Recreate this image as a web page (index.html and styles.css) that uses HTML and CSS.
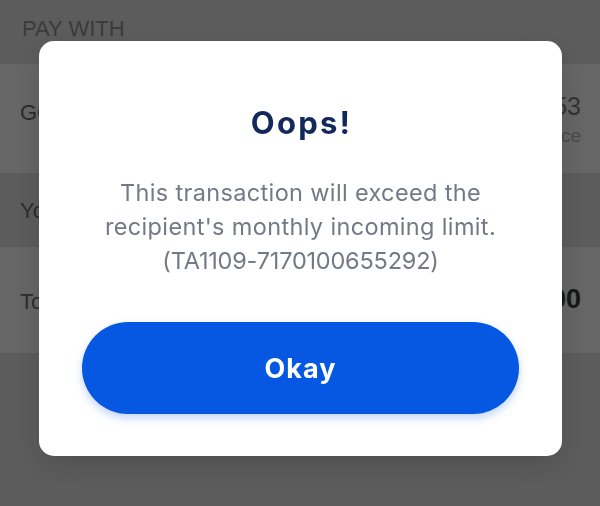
FILE: index.html
```html
<!DOCTYPE html>
<html lang="en">
<head>
<meta charset="utf-8">
<title>Oops</title>
<link rel="stylesheet" href="styles.css">
</head>
<body>
<div class="page">
  <div class="section-head">PAY WITH</div>
  <div class="row row-wallet">
    <div class="row-label">GCash</div>
    <div class="row-right">
      <div class="amount">PHP 2,453</div>
      <div class="sub">Balance</div>
    </div>
  </div>
  <div class="section-head section-mid">You pay</div>
  <div class="row row-total">
    <div class="row-label">Total</div>
    <div class="row-right">
      <div class="amount amount-bold">PHP 1,000</div>
    </div>
  </div>
</div>

<div class="overlay">
  <div class="modal">
    <h1 class="modal-title">Oops!</h1>
    <p class="modal-text">This transaction will exceed the recipient's monthly incoming limit. <span class="ref-code">(TA1109-7170100655292)</span></p>
    <button class="modal-btn" type="button">Okay</button>
  </div>
</div>
</body>
</html>
```
FILE: styles.css
```css
html, body {
  margin: 0;
  padding: 0;
}
body {
  width: 600px;
  height: 506px;
  overflow: hidden;
  background: #e6e6e6;
  font-family: "Liberation Sans", Arial, sans-serif;
}
.page {
  display: flex;
  flex-direction: column;
}
.section-head {
  height: 64px;
  box-sizing: border-box;
  padding: 16px 22px 0;
  font-size: 22px;
  line-height: 25px;
  color: #939393;
  background: #e6e6e6;
}
.section-mid {
  height: 74px;
  padding: 25px 20px 0;
  color: #707070;
}
.row {
  background: #ffffff;
  display: flex;
  justify-content: space-between;
  box-sizing: border-box;
  padding: 0 19px 0 20px;
}
.row-wallet {
  height: 109px;
  padding-top: 28px;
}
.row-total {
  height: 106px;
  padding-top: 38px;
}
.row-label {
  font-size: 22px;
  line-height: 25px;
  color: #6e6e6e;
  padding-top: 8px;
}
.row-total .row-label {
  padding-top: 4px;
}
.row-right {
  text-align: right;
}
.amount {
  font-size: 25px;
  line-height: 28px;
  color: #808080;
}
.amount-bold {
  font-weight: bold;
  color: #3c3c3c;
  font-size: 27px;
}
.sub {
  font-size: 19px;
  line-height: 32px;
  color: #b9b9b9;
}

.overlay {
  position: fixed;
  inset: 0;
  background: rgba(0, 0, 0, 0.6);
  display: flex;
  justify-content: center;
  align-items: flex-start;
  padding-top: 41px;
}
.modal {
  width: 523px;
  height: 415px;
  box-sizing: border-box;
  margin-left: 1px;
  background: #ffffff;
  border-radius: 15px;
  padding: 0 30px 42px;
  display: flex;
  flex-direction: column;
  align-items: center;
  box-shadow: 0 10px 30px rgba(0, 0, 0, 0.15);
  font-family: Inter, Lato, sans-serif;
}
.modal-title {
  margin: 65px 0 0;
  font-size: 31px;
  line-height: 34px;
  font-weight: 700;
  color: #13295a;
  letter-spacing: 2.2px;
  padding-left: 2px;
}
.modal-text {
  margin: 36px 0 0;
  font-size: 23.5px;
  line-height: 34px;
  color: #737985;
  text-align: center;
  letter-spacing: 0.35px;
}
.ref-code {
  letter-spacing: -0.2px;
}
.modal-btn {
  margin-top: auto;
  margin-left: 13px;
  margin-right: 13px;
  width: calc(100% - 26px);
  height: 92px;
  border: none;
  border-radius: 46px;
  background: #0658e2;
  color: #ffffff;
  font-family: Inter, Lato, sans-serif;
  font-size: 27px;
  font-weight: 700;
  letter-spacing: 1px;
  box-shadow: 0 4px 8px rgba(6, 88, 226, 0.25);
  cursor: pointer;
}
```
